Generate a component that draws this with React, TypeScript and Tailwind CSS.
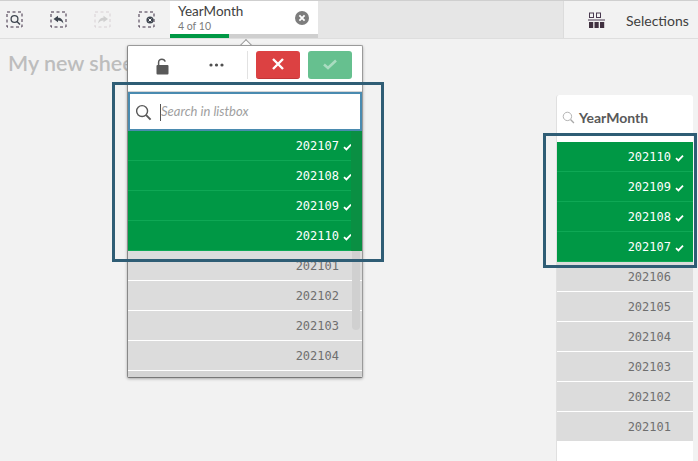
import React from "react";

const popoverRows = ["202101", "202102", "202103", "202104"];
const popoverSelected = ["202107", "202108", "202109", "202110"];
const panelSelected = ["202110", "202109", "202108", "202107"];
const panelRows = ["202106", "202105", "202104", "202103", "202102", "202101"];

function DashedBox({ faded, children }: { faded?: boolean; children: React.ReactNode }) {
  const stroke = faded ? "#d8d0d4" : "#3f2f45";
  return (
    <svg width="18" height="18" viewBox="0 0 18 18" fill="none">
      <rect x="1" y="1" width="15" height="15" stroke={stroke} strokeWidth="1" strokeDasharray="3 2.5" />
      {children}
    </svg>
  );
}

function Check({ className }: { className?: string }) {
  return (
    <svg width="9" height="8" viewBox="0 0 9 8" className={className}>
      <path d="M1 4.2 L3.4 6.4 L8 1.6" fill="none" stroke="currentColor" strokeWidth="1.8" />
    </svg>
  );
}

function Lens({ size, color, width }: { size: number; color: string; width: number }) {
  return (
    <svg width={size} height={size} viewBox="0 0 18 18" fill="none">
      <circle cx="7.5" cy="7.5" r="5.8" stroke={color} strokeWidth={width} />
      <path d="M11.8 11.8 L16.5 16.5" stroke={color} strokeWidth={width + 0.6} />
    </svg>
  );
}

function Row({ label, selected, popover }: { label: string; selected?: boolean; popover?: boolean }) {
  return (
    <div
      className={
        "flex h-[30px] shrink-0 items-center justify-end border-b " +
        (popover ? "pr-[10px] " : "pr-[9px] ") +
        (selected ? "border-[#0fa855] bg-[#009845] text-white" : "border-white bg-[#dcdcdc] text-[#6f6f6f]")
      }
    >
      <span className="font-['DejaVu_Sans_Mono',monospace] text-[12px] leading-none">{label}</span>
      <span className="ml-[4px] flex w-[9px] justify-center pt-[2px]">{selected && <Check />}</span>
    </div>
  );
}

export default function App() {
  return (
    <div className="relative flex h-[461px] w-[698px] flex-col overflow-hidden bg-[#f2f2f2] font-['Lato',sans-serif]">
      <header className="flex h-[39px] shrink-0 border-t border-b border-t-[#cfcfcf] border-b-[#dedede] bg-[#f2f2f2]">
        <div className="flex w-[170px] items-center gap-[26px] pl-[6px]">
          <DashedBox>
            <circle cx="8.5" cy="8" r="3.4" stroke="#3f4650" strokeWidth="1.3" />
            <path d="M11 10.5 L14 13.5" stroke="#3f4650" strokeWidth="1.5" />
          </DashedBox>
          <DashedBox>
            <path d="M3.5 8 L8 4.8 V6.7 C11 6.7 13 8.5 13.4 12.5 C12 10.4 10.5 9.5 8 9.5 V11.2 Z" fill="#3f4650" />
          </DashedBox>
          <DashedBox faded>
            <path d="M14 8 L9.5 4.8 V6.7 C6.5 6.7 4.5 8.5 4.1 12.5 C5.5 10.4 7 9.5 9.5 9.5 V11.2 Z" fill="#cfcfcf" />
          </DashedBox>
          <DashedBox>
            <circle cx="12" cy="9" r="3.6" fill="#3f4650" />
            <path d="M10.6 7.6 L13.4 10.4 M13.4 7.6 L10.6 10.4" stroke="#fff" strokeWidth="1" />
          </DashedBox>
        </div>

        <div className="flex h-full w-[148px] flex-col bg-white">
          <div className="flex flex-1 items-center justify-between pr-[9px] pl-[8px]">
            <div className="flex flex-col">
              <span className="text-[13.5px] leading-[17px] text-[#404040]">YearMonth</span>
              <span className="text-[10.5px] leading-[12px] text-[#7b7b7b]">4 of 10</span>
            </div>
            <svg width="14" height="14" viewBox="0 0 14 14">
              <circle cx="7" cy="7" r="7" fill="#7d7d7d" />
              <path d="M4.4 4.4 L9.6 9.6 M9.6 4.4 L4.4 9.6" stroke="#fff" strokeWidth="1.8" />
            </svg>
          </div>
          <div className="flex h-[4px] bg-[#cfcfcf]">
            <div className="w-[59px] bg-[#009845]" />
          </div>
        </div>

        <div className="flex-1 bg-[#e6e6e6]" />

        <div className="flex w-[135px] items-center border-l border-[#dcdcdc] pt-[1px] pl-[24px]">
          <svg width="17" height="17" viewBox="0 0 17 17">
            <rect x="1.5" y="1" width="4" height="4.5" fill="none" stroke="#4a3a50" />
            <rect x="8.5" y="1" width="4" height="4.5" fill="none" stroke="#4a3a50" />
            <path d="M0 8 H17" stroke="#4a3a50" />
            <rect x="1" y="10" width="4.2" height="6" fill="#40303f" />
            <rect x="6.5" y="10" width="4.2" height="6" fill="#40303f" />
            <rect x="12" y="10" width="4.2" height="6" fill="#40303f" />
          </svg>
          <span className="ml-[21px] text-[14px] text-[#404040]">Selections</span>
        </div>
      </header>

      <main className="flex flex-1 items-start justify-between">
        <h1 className="mt-[10px] ml-[8px] text-[21.5px] leading-[28px] font-semibold whitespace-nowrap text-[#bdbdbd]">
          My new sheet
        </h1>
        <section className="mt-[56px] mr-[5px] flex h-[366px] w-[137px] flex-col rounded-t-[3px] border-l border-[#e0e0e0] bg-white">
          <div className="flex h-[47px] shrink-0 items-center gap-[4px] pb-[2px] pl-[5px]">
            <Lens size={13} color="#a8a8a8" width={1.2} />
            <span className="text-[14px] font-bold text-[#595959]">YearMonth</span>
          </div>
          {panelSelected.map((label) => (
            <Row key={label} label={label} selected />
          ))}
          {panelRows.map((label) => (
            <Row key={label} label={label} />
          ))}
        </section>
      </main>

      {/* selection popover */}
      <div className="absolute top-[38px] left-[239px] h-[8px] w-[14px] overflow-hidden">
        <div className="mx-auto mt-[3px] size-[10px] rotate-45 border-t border-l border-[#9a9a9a] bg-white" />
      </div>
      <div className="absolute top-[45px] left-[127px] flex h-[333px] w-[236px] flex-col overflow-hidden rounded-[2px] border border-t-[#9a9a9a] border-r-[#9a9a9a] border-b-[#777] border-l-[#888] bg-white shadow-[0_1px_3px_rgba(0,0,0,0.3)]">
        <div className="flex h-[46px] shrink-0 items-center border-b border-[#d5d5d5] pb-[8px]">
          <div className="flex w-[119px] items-center justify-between pr-[23px] pl-[28px]">
            <svg width="13" height="17" viewBox="0 0 13 17" className="mt-[4px]">
              <path d="M2.6 7 V4.4 C2.6 2.4 4 1.2 5.9 1.2 C7.6 1.2 8.8 2.1 9.2 3.6" fill="none" stroke="#595959" strokeWidth="1.5" />
              <rect x="0.5" y="7" width="12" height="9.5" rx="1" fill="#595959" />
            </svg>
            <svg width="15" height="4" viewBox="0 0 15 4">
              <circle cx="2" cy="2" r="1.6" fill="#505050" />
              <circle cx="7.5" cy="2" r="1.6" fill="#505050" />
              <circle cx="13" cy="2" r="1.6" fill="#505050" />
            </svg>
          </div>
          <div className="h-[28px] w-px bg-[#e2e2e2]" />
          <button className="ml-[8px] flex h-[28px] w-[44px] items-center justify-center rounded-[3px] border-b border-[#c23538] bg-[#dc4142]">
            <svg width="12" height="12" viewBox="0 0 12 12">
              <path d="M1 1 L11 11 M11 1 L1 11" stroke="#fff" strokeWidth="2.4" />
            </svg>
          </button>
          <button className="ml-[8px] flex h-[28px] w-[44px] items-center justify-center rounded-[3px] bg-[#66c08f]">
            <svg width="14" height="11" viewBox="0 0 14 11">
              <path d="M1 5.5 L5 9 L13 1.5" fill="none" stroke="#a9dcc0" strokeWidth="2.6" />
            </svg>
          </button>
        </div>
        <div className="flex h-[39px] shrink-0 items-center border-2 border-[#4a8bb0] bg-white pt-[1px] pl-[5px]">
          <Lens size={17} color="#595959" width={1.5} />
          <div className="ml-[8px] h-[17px] w-px bg-[#555]" />
          <span className="text-[13px] text-[#a0a0a0] italic">Search in listbox</span>
        </div>
        <div className="relative flex-1 overflow-hidden bg-[#d4d4d4]">
          {popoverSelected.map((label) => (
            <Row key={label} label={label} selected popover />
          ))}
          {popoverRows.map((label) => (
            <Row key={label} label={label} popover />
          ))}
          <div className="absolute top-0 right-0 h-[120px] w-[11px] bg-[#0a8f43]" />
          <div className="absolute top-[120px] right-[2px] h-[79px] w-[8px] rounded-b-[4px] bg-[#d0d0d0]" />
        </div>
      </div>

      {/* highlight boxes drawn over the screenshot */}
      <div className="pointer-events-none absolute top-[82px] left-[112px] h-[180px] w-[272px] border-[3px] border-[#2f5d75]" />
      <div className="pointer-events-none absolute top-[133px] left-[543px] h-[135px] w-[154px] border-[3px] border-[#2f5d75]" />
    </div>
  );
}
